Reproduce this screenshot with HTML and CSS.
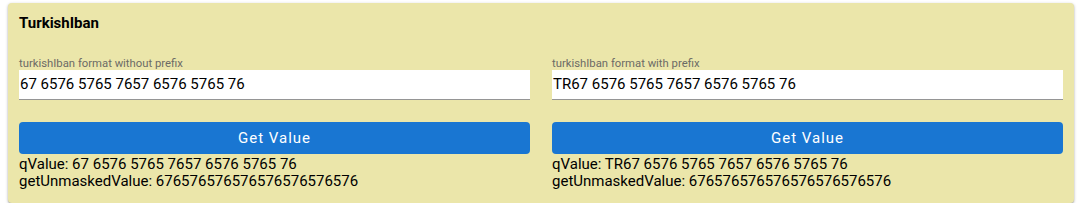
FILE: index.html
```html
<!DOCTYPE html>
<html>
<head>
<meta charset="utf-8">
<link rel="stylesheet" href="styles.css">
</head>
<body>
<div class="card">
  <div class="title">TurkishIban</div>
  <div class="cols">
    <div class="col">
      <div class="field">
        <div class="label">turkishIban format without prefix</div>
        <div class="input">67 6576 5765 7657 6576 5765 76</div>
      </div>
      <button class="btn">Get Value</button>
      <div class="out">qValue: 67 6576 5765 7657 6576 5765 76</div>
      <div class="out">getUnmaskedValue: 676576576576576576576576</div>
    </div>
    <div class="col">
      <div class="field">
        <div class="label">turkishIban format with prefix</div>
        <div class="input">TR67 6576 5765 7657 6576 5765 76</div>
      </div>
      <button class="btn">Get Value</button>
      <div class="out">qValue: TR67 6576 5765 7657 6576 5765 76</div>
      <div class="out">getUnmaskedValue: 676576576576576576576576</div>
    </div>
  </div>
</div>
</body>
</html>
```

FILE: styles.css
```css
html, body { margin: 0; padding: 0; background: #ffffff; }
body { padding: 3px 8px 0 8px; font-family: Roboto, "Liberation Sans", sans-serif; }
.card {
  background: #ebe6aa;
  border-radius: 4px;
  box-shadow: 0 1px 3px rgba(0,0,0,0.3), 0 1px 1px rgba(0,0,0,0.12);
  padding: 11px 11px 12px 11px;
  width: 1066px;
  box-sizing: border-box;
  height: 200px;
}
.title { font-weight: 700; font-size: 15px; line-height: 18px; color: #000; }
.cols { display: grid; grid-template-columns: 1fr 1fr; column-gap: 22px; margin-top: 25px; }
.field { display: flex; flex-direction: column; }
.label { font-size: 11.3px; line-height: 13px; color: #6b6b66; }
.input {
  background: #fff;
  height: 29px;
  border-bottom: 1px solid #959595;
  font-size: 15px;
  line-height: 29px;
  color: #000;
  padding-left: 1px;
}
.btn {
  display: block;
  width: 100%;
  margin-top: 22px;
  height: 32px;
  border: none;
  border-radius: 4px;
  background: #1976d2;
  color: #fff;
  font-family: Roboto, "Liberation Sans", sans-serif;
  font-size: 15px;
  letter-spacing: 1px;
  padding: 0;
}
.out { font-size: 15px; line-height: 17px; color: #000; }
.btn + .out { margin-top: 2px; }
```
